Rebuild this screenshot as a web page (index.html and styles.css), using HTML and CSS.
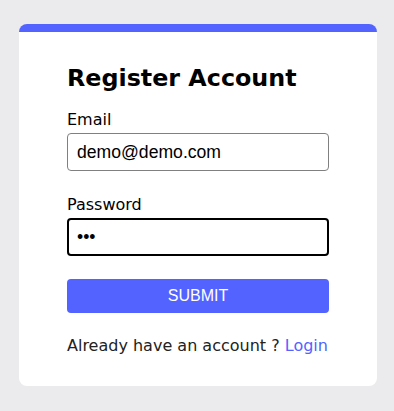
FILE: index.html
```html
<!DOCTYPE html>
<html>
<head>
<meta charset="utf-8">
<link rel="stylesheet" href="styles.css">
</head>
<body>
<div class="card">
  <h1 class="title">Register Account</h1>
  <label class="label" for="email">Email</label>
  <input class="input" id="email" type="text" value="demo@demo.com">
  <label class="label label-pw" for="pw">Password</label>
  <input class="input input-focus" id="pw" type="password" value="abc">
  <button class="submit">SUBMIT</button>
  <p class="footer">Already have an account ? <a class="link" href="#">Login</a></p>
</div>
</body>
</html>
```
FILE: styles.css
```css
html, body {
  margin: 0;
  padding: 0;
  background: #ebebed;
  font-family: "DejaVu Sans", sans-serif;
}
body {
  padding: 24px 17px 0 19px;
}
.card {
  width: 358px;
  box-sizing: border-box;
  background: #fff;
  border-top: 8px solid #5363ff;
  border-radius: 8px;
  padding: 32px 48px 31px;
  display: flex;
  flex-direction: column;
}
.title {
  margin: 0;
  font-size: 23.8px;
  line-height: 28px;
  font-weight: bold;
  color: #000;
}
.label {
  margin-top: 18px;
  font-size: 16px;
  line-height: 19px;
  color: #000;
}
.label-pw {
  margin-top: 24px;
}
.input {
  margin-top: 4px;
  height: 38px;
  box-sizing: border-box;
  border: 1px solid #808080;
  border-radius: 4px;
  padding: 0 9px;
  font-family: "Liberation Sans", Arial, sans-serif;
  font-size: 17.6px;
  color: #000;
  background: #fff;
  outline: none;
}
.input-focus {
  border: 2px solid #000;
  padding: 0 8px;
}
.submit {
  margin-top: 23px;
  height: 34px;
  border: none;
  border-radius: 4px;
  background: #5363ff;
  color: #fff;
  font-family: "Liberation Sans", Arial, sans-serif;
  font-size: 16px;
  padding: 0;
}
.footer {
  margin: 23px 0 0;
  font-size: 16px;
  line-height: 19px;
  color: #222;
}
.link {
  color: #5363ff;
  text-decoration: none;
}
```
